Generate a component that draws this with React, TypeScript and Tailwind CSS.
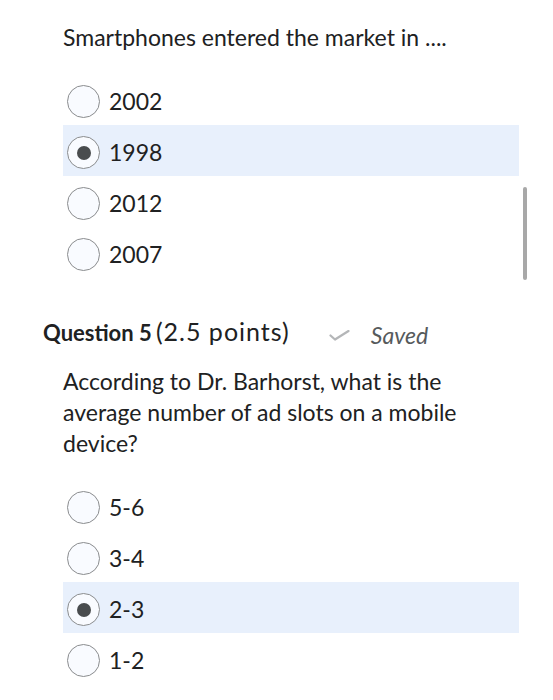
const q1 = [
  { label: "2002", selected: false },
  { label: "1998", selected: true },
  { label: "2012", selected: false },
  { label: "2007", selected: false },
];

const q2 = [
  { label: "5-6", selected: false },
  { label: "3-4", selected: false },
  { label: "2-3", selected: true },
  { label: "1-2", selected: false },
];

function Radio({ selected }: { selected: boolean }) {
  return (
    <span className="flex h-[33px] w-[33px] shrink-0 items-center justify-center rounded-full border-[1.5px] border-[#8a8c8e] bg-[#f9fbff]">
      {selected && <span className="h-[14px] w-[14px] rounded-full bg-[#494c4e]" />}
    </span>
  );
}

function Options({ items }: { items: { label: string; selected: boolean }[] }) {
  return (
    <div className="flex flex-col">
      {items.map((o) => (
        <label
          key={o.label}
          className={`flex h-[51px] items-center gap-[9px] px-[4px] pt-[4px] ${o.selected ? "bg-[#e8f0fc]" : ""}`}
        >
          <Radio selected={o.selected} />
          <span className="text-[23px] leading-[31px] text-[#202122]">{o.label}</span>
        </label>
      ))}
    </div>
  );
}

export default function App() {
  return (
    <div className="relative h-[700px] w-[553px] overflow-hidden bg-white font-['Lato',sans-serif] text-[#202122]">
      <div className="ml-[63px] mr-[34px] pt-[22px]">
        <p className="text-[23px] leading-[31px]">Smartphones entered the market in ....</p>
        <div className="mt-[21px]">
          <Options items={q1} />
        </div>
      </div>

      <div className="ml-[43px] mt-[38px] flex items-baseline">
        <h2 className="leading-[31px]">
          <span className="text-[22px] font-bold">Question 5</span>{" "}
          <span className="text-[25px] tracking-[1px]">(2.5 points)</span>
        </h2>
        <span className="ml-[39px] flex items-center gap-[21px] text-[23px] leading-[31px] text-[#565a5c] italic">
          <svg width="21" height="11" viewBox="0 0 21 11" fill="none" className="self-center">
            <path d="M1.5 5.5 L6 9.5 L19.5 1" stroke="#b4b6b8" strokeWidth="2.2" strokeLinecap="round" strokeLinejoin="round" />
          </svg>
          Saved
        </span>
      </div>

      <div className="ml-[63px] mr-[34px]">
        <p className="mr-[19px] mt-[15px] text-[23px] leading-[31px]">
          According to Dr. Barhorst, what is the average number of ad slots on a mobile device?
        </p>
        <div className="mt-[21px]">
          <Options items={q2} />
        </div>
      </div>

      <div className="absolute left-[523px] top-[187px] h-[93px] w-[4px] rounded-full bg-[#a8a8a8]" />
    </div>
  );
}
